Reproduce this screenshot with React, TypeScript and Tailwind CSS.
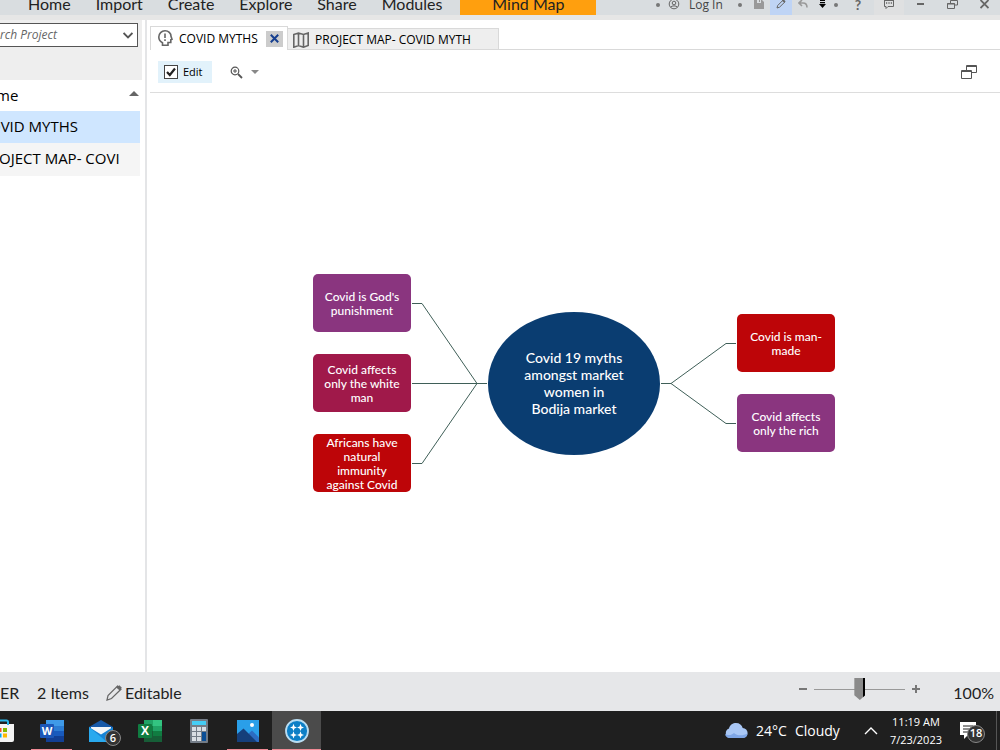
import React from 'react';

const ribbonTabs = ['Home', 'Import', 'Create', 'Explore', 'Share', 'Modules'];

interface MindMapNode {
  id: number;
  lines: string[];
  color: string;
}

const leftNodes: MindMapNode[] = [
  { id: 1, lines: ["Covid is God's", 'punishment'], color: 'bg-[#8a357f]' },
  { id: 2, lines: ['Covid affects', 'only the white', 'man'], color: 'bg-[#a0194a]' },
  { id: 3, lines: ['Africans have', 'natural', 'immunity', 'against Covid'], color: 'bg-[#bd0508]' },
];

const rightNodes: MindMapNode[] = [
  { id: 4, lines: ['Covid is man-', 'made'], color: 'bg-[#bd0508]' },
  { id: 5, lines: ['Covid affects', 'only the rich'], color: 'bg-[#8a357f]' },
];

const Dot: React.FunctionComponent<{ className: string }> = ({ className }) => (
  <span className={`flex items-start justify-center pt-[3px] ${className}`}>
    <span className="h-1 w-1 rounded-full bg-[#777]" />
  </span>
);

interface ToolButtonProps {
  label: string;
  className: string;
  children: React.ReactNode;
}

const ToolButton: React.FunctionComponent<ToolButtonProps> = ({ label, className, children }) => (
  <button type="button" aria-label={label} className={`flex items-start justify-center ${className}`}>
    {children}
  </button>
);

const Ribbon = () => (
  <header className="flex h-[15px] shrink-0 overflow-hidden bg-[#d9dde0] font-['Lato',sans-serif] text-[#222]">
    <nav className="flex gap-[25px] pl-7 text-base leading-[8px]">
      {ribbonTabs.map((tab) => (
        <button key={tab} type="button" className="pb-[7px]">
          {tab}
        </button>
      ))}
    </nav>
    <button type="button" className="ml-[18px] w-[136px] bg-[#ff9f0e] pb-[7px] text-base leading-[8px]">
      Mind Map
    </button>
    <div className="ml-auto flex text-[#666]">
      <Dot className="w-3" />
      <ToolButton label="Account" className="w-5">
        <svg width="12" height="10" viewBox="0 0 12 10" fill="none" stroke="currentColor">
          <circle cx="6" cy="4" r="4.8" />
          <circle cx="6" cy="3" r="1.8" />
          <path d="M2.6 7.2c1-1.8 5.800-1.800 6.800 0" />
        </svg>
      </ToolButton>
      <button
        type="button"
        className="w-12 pb-[5px] pl-[5px] text-left font-['Open_Sans',sans-serif] text-xs leading-[10px] text-[#444]"
      >
        Log In
      </button>
      <Dot className="w-4" />
      <ToolButton label="Save" className="w-[22px]">
        <svg width="10" height="9" viewBox="0 0 10 9">
          <path d="M0 0h3v3h4V0h1l2 2v7H0z" fill="#999" />
          <path d="M5 0h1v2H5z" fill="#999" />
        </svg>
      </ToolButton>
      <ToolButton label="Edit mode" className="w-[22px] bg-[#bfd4f5]">
        <svg width="10" height="9" viewBox="0 0 10 9" fill="none" stroke="currentColor">
          <path d="M1 8l.7-2.500L7 .2 9 1.800 3.500 7.200z" />
          <path d="M6.500 0l2.500 2" strokeWidth="2" />
        </svg>
      </ToolButton>
      <ToolButton label="Undo" className="w-[22px]">
        <svg width="10" height="9" viewBox="0 0 10 9" fill="none" stroke="#999" strokeWidth="1.600">
          <path d="M4 0L1 3l3 3M1 3h4c2.500 0 4 1.500 4 4.500" />
        </svg>
      </ToolButton>
      <ToolButton label="More commands" className="w-4">
        <svg width="7" height="9" viewBox="0 0 7 9" fill="#000">
          <path d="M1 0h5v1H1zM1 2h5v1.200H1zM0 4h7L3.500 8z" />
        </svg>
      </ToolButton>
      <Dot className="w-3" />
      <button type="button" className="w-8 pb-[5px] text-sm font-bold leading-[10px]">
        ?
      </button>
      <ToolButton label="Feedback" className="w-[30px] bg-[#dfe0e1]">
        <svg width="10" height="9" viewBox="0 0 10 9" fill="none" stroke="currentColor">
          <path d="M.5-1v7.500H2V8.500L4 6.500h5.500V-1M.5.500h9" />
          <path d="M2 3h1.200M4.400 3h1.200M6.800 3H8" strokeWidth="1.400" />
        </svg>
      </ToolButton>
      <ToolButton label="Minimize" className="w-8">
        <span className="mt-[3px] h-[2px] w-[7px] bg-[#666]" />
      </ToolButton>
      <ToolButton label="Restore" className="w-8">
        <svg width="11" height="9" viewBox="0 0 11 9" fill="none" stroke="currentColor">
          <path d="M3.500 3V.5h7V5H7.500M.5 3.500h7v5h-7z" />
          <path d="M0 4h8" />
        </svg>
      </ToolButton>
      <ToolButton label="Close" className="w-8">
        <svg width="9" height="9" viewBox="0 0 9 9" stroke="currentColor" strokeWidth="1.800">
          <path d="M.5 0l8 8M8.500 0l-8 8" />
        </svg>
      </ToolButton>
    </div>
  </header>
);

const Sidebar = () => (
  <aside className="w-[147px] shrink-0 overflow-hidden border-r-2 border-[#e4e5e7] bg-white font-['Open_Sans',sans-serif] text-black">
    <div className="mr-[3px] h-[60px] bg-[#eee] pt-[3px] pr-1">
      <div className="flex h-6 items-center border border-l-0 border-[#555] bg-white pr-1">
        <input
          type="text"
          aria-label="Search Project"
          placeholder="rch Project"
          className="w-0 flex-1 text-xs italic outline-none placeholder:text-[#666]"
        />
        <svg width="10" height="7" viewBox="0 0 10 7" fill="none" stroke="#555" strokeWidth="1.800">
          <path d="M.6 1L5 5.400 9.400 1" />
        </svg>
      </div>
    </div>
    <button type="button" className="flex h-[31px] w-full items-center pr-[6px] text-[15px]">
      <span className="-ml-1">me</span>
      <svg className="mb-1 ml-auto" width="10" height="5" viewBox="0 0 10 5" fill="#666">
        <path d="M5 0l5 5H0z" />
      </svg>
    </button>
    <ul className="mr-[5px] text-[15px]">
      <li className="flex h-8 items-center bg-[#cfe6ff] pb-[2px]">
        <button type="button" className="-ml-[11px] whitespace-nowrap">
          OVID MYTHS
        </button>
      </li>
      <li className="flex h-[33px] items-center bg-[#f5f5f5] pb-[2px]">
        <button type="button" className="-ml-px whitespace-nowrap">
          OJECT MAP- COVI
        </button>
      </li>
    </ul>
  </aside>
);

const DocumentTabs = () => (
  <div className="ml-[3px] flex h-[30px] shrink-0 items-end border-b border-[#d9d9d9] font-['Open_Sans',sans-serif] text-xs text-black">
    <div className="-mb-px flex h-6 w-[138px] items-center border border-b-0 border-[#d9d9d9] bg-white pl-[7px]">
      <svg width="15" height="17" viewBox="0 0 15 17" fill="none" stroke="#666" strokeWidth="1.600">
        <path d="M4.500 15.200v-2.500C2 11.500.8 9.300.8 7 .8 3.500 3.500.8 7 .8S13 3.300 13 6.300l1 3-1.200.500v2.700H10v2.700z" />
        <path d="M7 3.500v4.500M7 9.300v1.800" />
      </svg>
      <button type="button" className="ml-[6px] whitespace-nowrap">
        COVID MYTHS
      </button>
      <button
        type="button"
        aria-label="Close tab"
        className="mr-1 ml-auto flex h-4 w-[17px] items-center justify-center bg-[#ccc]"
      >
        <svg width="9" height="9" viewBox="0 0 9 9" stroke="#153e8f" strokeWidth="2">
          <path d="M.8.8l7.400 7.400M8.200.8L.8 8.200" />
        </svg>
      </button>
    </div>
    <button
      type="button"
      className="flex h-[21px] w-[211px] items-center border-t border-r border-[#d9d9d9] bg-[#eee] pt-px pl-[5px] whitespace-nowrap"
    >
      <svg width="16" height="16" viewBox="0 0 16 16" fill="none" stroke="#666" strokeWidth="1.600">
        <path d="M.8 2.500L5.500 1l5 1.500L15.200 1v12.500l-4.700 1.700-5-1.700-4.700 1.700zM5.500 1v12.500M10.500 2.500v12.700" />
      </svg>
      <span className="ml-[6px]">PROJECT MAP- COVID MYTH</span>
    </button>
  </div>
);

const Toolbar = () => (
  <div className="ml-[3px] flex h-[43px] shrink-0 items-center border-b border-[#ddd] pt-[2px] pr-[23px] pl-2 font-['Open_Sans',sans-serif]">
    <label className="relative flex h-[22px] w-[54px] items-center gap-[5px] bg-[#e2f2fb] pl-[6px] text-[11px] text-black">
      <input
        type="checkbox"
        defaultChecked
        className="peer h-[14px] w-[14px] appearance-none border border-[#444] bg-white"
      />
      <svg
        className="pointer-events-none absolute left-2 hidden peer-checked:block"
        width="10"
        height="10"
        viewBox="0 0 10 10"
        fill="none"
        stroke="#222"
        strokeWidth="2.200"
      >
        <path d="M1 5l2.800 3L9 1.500" />
      </svg>
      Edit
    </label>
    <button type="button" aria-label="Zoom" className="ml-[18px] flex items-center gap-2">
      <svg width="13" height="13" viewBox="0 0 13 13" fill="none" stroke="#555">
        <circle cx="5" cy="5" r="3.800" strokeWidth="1.200" />
        <path d="M3 5h4M5 3v4" />
        <path d="M8 8l4 4" strokeWidth="1.800" />
      </svg>
      <svg width="8" height="4" viewBox="0 0 8 4" fill="#888">
        <path d="M0 0h8L4 4z" />
      </svg>
    </button>
    <button type="button" aria-label="Undock" className="ml-auto">
      <svg width="16" height="14" viewBox="0 0 16 14" fill="none" stroke="#555">
        <path d="M5.500 5V.5h10v7h-5M5 1.500h11M.5 5.500h10v8H.5zM0 6.500h11" />
      </svg>
    </button>
  </div>
);

const NodeColumn: React.FunctionComponent<{ nodes: MindMapNode[] }> = ({ nodes }) => (
  <div className="flex flex-col gap-[22px]">
    {nodes.map((node) => (
      <div
        key={node.id}
        className={`flex h-[58px] w-[98px] flex-col items-center justify-center rounded-[5px] pt-[2px] text-xs leading-[14px] whitespace-nowrap ${node.color}`}
      >
        {node.lines.map((line) => (
          <span key={line}>{line}</span>
        ))}
      </div>
    ))}
  </div>
);

const MindMap = () => (
  <div className="flex flex-1 items-center justify-center pt-px pl-px font-['Lato',sans-serif] font-medium text-white">
    <NodeColumn nodes={leftNodes} />
    <svg width="77" height="218" viewBox="0 0 77 218" fill="none" stroke="#3f5f58">
      <path d="M1 29.500h10l55 80h10M1 109.500h65M1 189.500h10l55-80" />
    </svg>
    <div className="flex h-[143px] w-[172px] flex-col items-center justify-center rounded-[50%] bg-[#0a3d71] text-sm leading-[17px]">
      <span>Covid 19 myths</span>
      <span>amongst market</span>
      <span>women in</span>
      <span>Bodija market</span>
    </div>
    <svg width="77" height="218" viewBox="0 0 77 218" fill="none" stroke="#3f5f58">
      <path d="M1 109.500h10l55-40h10M11 109.500l55 40h10" />
    </svg>
    <NodeColumn nodes={rightNodes} />
  </div>
);

const StatusBar = () => (
  <footer className="flex h-[39px] shrink-0 items-center bg-[#e6e7e9] pb-px font-['Lato',sans-serif] text-base text-[#222]">
    <span className="w-[37px] pt-1">ER</span>
    <span className="w-[69px] pt-1">2 Items</span>
    <svg className="mt-1" width="16" height="16" viewBox="0 0 16 16" fill="none" stroke="#666" strokeWidth="1.200">
      <path d="M1 15l1-4.500L11.500 1 15 4.200 5.500 13.500z" />
      <path d="M11 1.500l3.500 3.200M12.500 1l2.500 2.500" strokeWidth="2.400" />
    </svg>
    <span className="ml-[3px] pt-1">Editable</span>
    <div className="mr-[33px] ml-auto flex items-center pb-1">
      <button type="button" aria-label="Zoom out" className="flex h-4 w-2 items-center">
        <span className="h-[2px] w-2 bg-[#777]" />
      </button>
      <input
        type="range"
        aria-label="Zoom level"
        defaultValue="50"
        className="mx-[7px] h-[22px] w-[91px] appearance-none bg-[linear-gradient(#999,#999)] bg-[length:100%_1px] bg-center bg-no-repeat [&::-webkit-slider-thumb]:h-[22px] [&::-webkit-slider-thumb]:w-[11px] [&::-webkit-slider-thumb]:appearance-none [&::-webkit-slider-thumb]:bg-[linear-gradient(90deg,#8a8a8a_80%,#000_80%)] [&::-webkit-slider-thumb]:[clip-path:polygon(0_0,100%_0,100%_78%,50%_100%,0_78%)]"
      />
      <button type="button" aria-label="Zoom in" className="flex h-4 w-2 items-center">
        <svg width="8" height="8" viewBox="0 0 8 8" stroke="#777" strokeWidth="2">
          <path d="M0 4h8M4 0v8" />
        </svg>
      </button>
    </div>
    <span className="mr-[6px] pt-1">100%</span>
  </footer>
);

const StoreIcon = () => (
  <svg width="14" height="24" viewBox="0 0 14 24">
    <path d="M0 5h14v16a2 2 0 01-2 2H0z" fill="#f4f4f4" />
    <path d="M0 1.500h6.500a1.500 1.500 0 011.500 1.500v3" fill="none" stroke="#29b6e8" strokeWidth="2" />
    <path d="M0 9h1.500v4H0z" fill="#f25022" />
    <path d="M3 9h4v4H3z" fill="#7fba00" />
    <path d="M0 14.500h1.500v4H0z" fill="#00a4ef" />
    <path d="M3 14.500h4v4H3z" fill="#ffb900" />
  </svg>
);

const WordIcon = () => (
  <svg width="24" height="22" viewBox="0 0 24 22">
    <path d="M6 0h18v6H6z" fill="#3f9ae8" />
    <path d="M6 6h18v5H6z" fill="#2b7cd3" />
    <path d="M6 11h18v5H6z" fill="#185abd" />
    <path d="M6 16h18v6H6z" fill="#123f94" />
    <rect y="4" width="14" height="14" rx="1" fill="#1c57b8" />
    <text x="7" y="15" textAnchor="middle" fontSize="11" fontWeight="700" fontFamily="Open Sans" fill="#fff">
      W
    </text>
  </svg>
);

const ExcelIcon = () => (
  <svg width="24" height="22" viewBox="0 0 24 22">
    <path d="M6 0h9v6H6z" fill="#21a366" />
    <path d="M15 0h9v6h-9z" fill="#33c481" />
    <path d="M6 6h9v5H6z" fill="#107c41" />
    <path d="M15 6h9v5h-9z" fill="#21a366" />
    <path d="M6 11h9v11H6z" fill="#185c37" />
    <path d="M15 11h9v5h-9z" fill="#107c41" />
    <path d="M15 16h9v6h-9z" fill="#155f37" />
    <rect y="4" width="14" height="14" rx="1" fill="#107c41" />
    <text x="7" y="15" textAnchor="middle" fontSize="12" fontWeight="700" fontFamily="Open Sans" fill="#fff">
      X
    </text>
  </svg>
);

const MailIcon = () => (
  <svg width="24" height="22" viewBox="0 0 24 22">
    <path d="M0 7l12-7 12 7v4H0z" fill="#1759a8" />
    <path d="M2 7h20v8H2z" fill="#f3f6f9" />
    <path d="M0 7l12 7.500L24 7v15H0z" fill="#1684d6" />
    <path d="M0 22V7l18 15z" fill="#29a9ee" />
  </svg>
);

const CalculatorIcon = () => (
  <svg width="18" height="24" viewBox="0 0 18 24">
    <rect width="18" height="24" rx="1" fill="#737c87" />
    <path d="M2 2h14v4H2z" fill="#45cdf5" />
    <path
      d="M2 8h4v4H2zM7 8h4v4H7zM12 8h4v4h-4zM2 13h4v4H2zM7 13h4v4H7zM2 18h4v4H2zM7 18h4v4H7z"
      fill="#d9dee4"
    />
    <path d="M12 13h4v9h-4z" fill="#0c4f96" />
  </svg>
);

const PhotosIcon = () => (
  <svg width="22" height="22" viewBox="0 0 22 22">
    <path d="M0 0h22v22H0z" fill="#2a9fe9" />
    <path d="M10 15l5-4.500 7 7V22H10z" fill="#2c6cc2" />
    <path d="M0 14l6.500-5.500L20 22H0z" fill="#153f7b" />
    <circle cx="15" cy="5" r="2" fill="#fff" />
  </svg>
);

const NvivoIcon = () => (
  <svg width="24" height="24" viewBox="0 0 24 24">
    <circle cx="12" cy="12" r="11" fill="#0d7fc6" stroke="#b9ddf2" strokeWidth="1.800" />
    <path
      d="M8.500 4.800l1 2.700 2.500 1-2.500 1-1 2.500-1-2.500-2.500-1 2.500-1zM15.500 4.800l1 2.700 2.500 1-2.500 1-1 2.500-1-2.500-2.500-1 2.500-1zM8.500 12.300l1 2.700 2.500 1-2.500 1-1 2.500-1-2.500-2.500-1 2.500-1zM15.500 12.300l1 2.700 2.500 1-2.500 1-1 2.500-1-2.500-2.500-1 2.500-1z"
      fill="#fff"
    />
  </svg>
);

const taskbarApps = [
  { name: 'Word', icon: <WordIcon />, open: true },
  { name: 'Mail', icon: <MailIcon />, badge: '6' },
  { name: 'Excel', icon: <ExcelIcon /> },
  { name: 'Calculator', icon: <CalculatorIcon /> },
  { name: 'Photos', icon: <PhotosIcon />, open: true },
  { name: 'NVivo', icon: <NvivoIcon />, active: true },
];

const Taskbar = () => (
  <div className="flex h-[39px] shrink-0 bg-[#1f1f1f] font-['Open_Sans',sans-serif] text-white">
    <button type="button" aria-label="Store" className="flex w-[27px] items-center">
      <StoreIcon />
    </button>
    {taskbarApps.map((app) => (
      <button
        key={app.name}
        type="button"
        aria-label={app.name}
        className={`relative flex w-[49px] items-center justify-center ${app.active ? 'bg-[#4b4b4b]' : ''}`}
      >
        {app.icon}
        {app.badge && (
          <span className="absolute right-1 bottom-1 flex h-4 w-4 items-center justify-center rounded-full border border-[#888] bg-[#333] text-[11px] font-semibold">
            {app.badge}
          </span>
        )}
        {(app.open || app.active) && (
          <span className={`absolute bottom-0 h-px bg-[#f08a95] ${app.active ? 'inset-x-0' : 'inset-x-1'}`} />
        )}
      </button>
    ))}
    <div className="ml-auto flex items-center">
      <button type="button" className="flex items-center text-sm whitespace-nowrap">
        <svg width="24" height="17" viewBox="0 0 24 17">
          <path d="M5.500 16a5 5 0 01-.5-9.500C6 2.500 9 1 12 1c3.500 0 6 2 6.700 5a5 5 0 01-.2 10z" fill="#a9c7f5" />
          <path d="M5.500 16a5 5 0 01-4.500-4c3 2 7 1 9-1 3 3 9 3 13.500.5A5 5 0 0118.500 16z" fill="#7fa6e6" />
        </svg>
        <span className="ml-2">24°C</span>
        <span className="ml-2">Cloudy</span>
      </button>
      <button type="button" aria-label="Show hidden icons" className="ml-6">
        <svg width="14" height="8" viewBox="0 0 14 8" fill="none" stroke="#fff" strokeWidth="1.400">
          <path d="M1 7l6-6 6 6" />
        </svg>
      </button>
      <button type="button" className="ml-3 flex flex-col items-center text-[11px] leading-[18px]">
        <span>11:19 AM</span>
        <span>7/23/2023</span>
      </button>
      <button type="button" aria-label="Notifications" className="relative mr-[11px] ml-[18px] h-6 w-[25px]">
        <svg width="17" height="17" viewBox="0 0 17 17">
          <path d="M0 0h16v13H8l-4 4v-4H0z" fill="#fff" />
          <path d="M3 4h10M3 7h10M3 10h6" stroke="#1f1f1f" />
        </svg>
        <span className="absolute right-0 bottom-0 flex h-[18px] w-[18px] items-center justify-center rounded-full border border-[#888] bg-[#333] text-[11px] font-semibold">
          18
        </span>
      </button>
      <span className="mr-[3px] h-[39px] w-px bg-[#555]" />
    </div>
  </div>
);

const App = () => (
  <div className="flex h-screen flex-col overflow-hidden bg-white">
    <Ribbon />
    <div className="h-[5px] shrink-0 bg-[#e6e6e6]" />
    <div className="flex min-h-0 flex-1">
      <Sidebar />
      <main className="flex min-w-0 flex-1 flex-col">
        <DocumentTabs />
        <Toolbar />
        <MindMap />
      </main>
    </div>
    <StatusBar />
    <Taskbar />
  </div>
);

export default App;
